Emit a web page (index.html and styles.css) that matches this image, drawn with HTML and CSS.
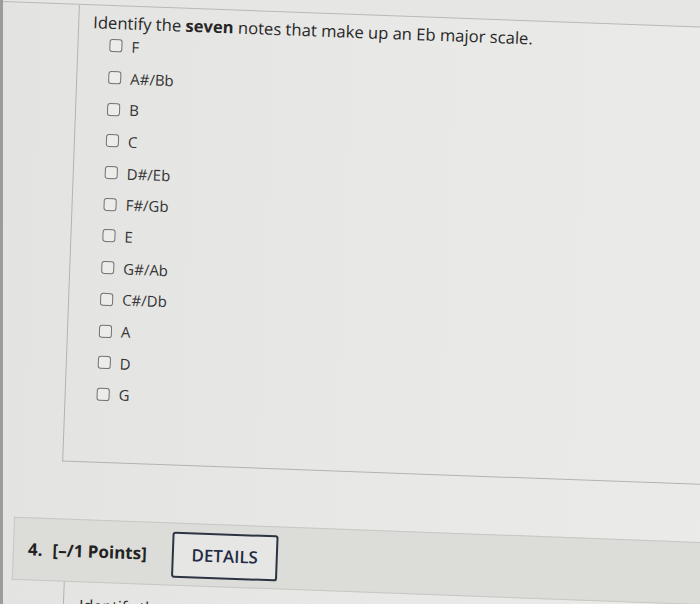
FILE: index.html
```html
<!DOCTYPE html>
<html lang="en">
<head>
<meta charset="utf-8">
<title>Question</title>
<link rel="stylesheet" href="styles.css">
</head>
<body>
<div class="page">
  <section class="qbody">
    <p class="prompt">Identify the <strong>seven</strong> notes that make up an Eb major scale.</p>
    <ul class="options">
      <li><span class="box"></span><span class="lbl">F</span></li>
      <li><span class="box"></span><span class="lbl">A#/Bb</span></li>
      <li><span class="box"></span><span class="lbl">B</span></li>
      <li><span class="box"></span><span class="lbl">C</span></li>
      <li><span class="box"></span><span class="lbl">D#/Eb</span></li>
      <li><span class="box"></span><span class="lbl">F#/Gb</span></li>
      <li><span class="box"></span><span class="lbl">E</span></li>
      <li><span class="box"></span><span class="lbl">G#/Ab</span></li>
      <li><span class="box"></span><span class="lbl">C#/Db</span></li>
      <li><span class="box"></span><span class="lbl">A</span></li>
      <li><span class="box"></span><span class="lbl">D</span></li>
      <li><span class="box"></span><span class="lbl">G</span></li>
    </ul>
  </section>
  <header class="qhead">
    <span class="num">4.</span>
    <span class="pts">[–/1 Points]</span>
    <button class="details">DETAILS</button>
  </header>
  <section class="qbody2">
    <p class="prompt2">Identify the</p>
  </section>
</div>
</body>
</html>
```

FILE: styles.css
```css
html, body {
  margin: 0;
  padding: 0;
}
body {
  width: 700px;
  height: 604px;
  overflow: hidden;
  background: #e6e6e4;
  border-left: 3px solid #9c9c9a;
  box-sizing: border-box;
  font-family: "Open Sans", "DejaVu Sans", sans-serif;
  color: #2b2b2b;
}
.page {
  width: 780px;
  height: 680px;
  transform: rotate(2.1deg);
  transform-origin: 0 0;
  border-top: 1px solid #b9b9b6;
  margin-top: 1px;
  background: linear-gradient(90deg, #e3e3e1 0%, #e8e8e6 50%, #ebebe9 100%);
}
.qbody {
  margin-left: 76px;
  border-left: 1px solid #b3b3b0;
  border-bottom: 1px solid #b3b3b0;
  padding: 7px 0 52px 14px;
}
.prompt {
  margin: 0;
  font-size: 16.6px;
  line-height: 20px;
  color: #262626;
}
.prompt strong {
  font-weight: 700;
}
.options {
  list-style: none;
  margin: -3px 0 0 0;
  padding: 0 0 0 17px;
}
.options li {
  height: 31.7px;
  display: flex;
  align-items: center;
  gap: 9px;
}
.box {
  width: 11px;
  height: 11px;
  border: 1.7px solid #727270;
  border-radius: 3px;
  background: #ececea;
  flex: none;
}
.lbl {
  font-size: 15px;
  color: #333;
}
.qhead {
  margin: 57px 0 0 30px;
  height: 63px;
  box-sizing: border-box;
  background: #dcdcd9;
  border: 1px solid #c7c7c4;
  border-right: none;
  display: flex;
  align-items: center;
  padding-left: 14px;
  font-size: 17px;
  font-weight: 700;
  color: #222;
}
.num {
  margin-right: 10px;
}
.pts {
  margin-right: 25px;
}
.details {
  width: 106px;
  height: 46px;
  box-sizing: border-box;
  border: 2px solid #2c3442;
  border-radius: 3px;
  background: #e6e6e4;
  font-family: "Open Sans", "DejaVu Sans", sans-serif;
  font-size: 17px;
  font-weight: 600;
  color: #1f2b44;
  padding: 0;
}
.qbody2 {
  margin-left: 82px;
  border-left: 1px solid #b3b3b0;
  padding: 12px 0 40px 15px;
}
.prompt2 {
  margin: 0;
  font-size: 16px;
  color: #262626;
}
```
